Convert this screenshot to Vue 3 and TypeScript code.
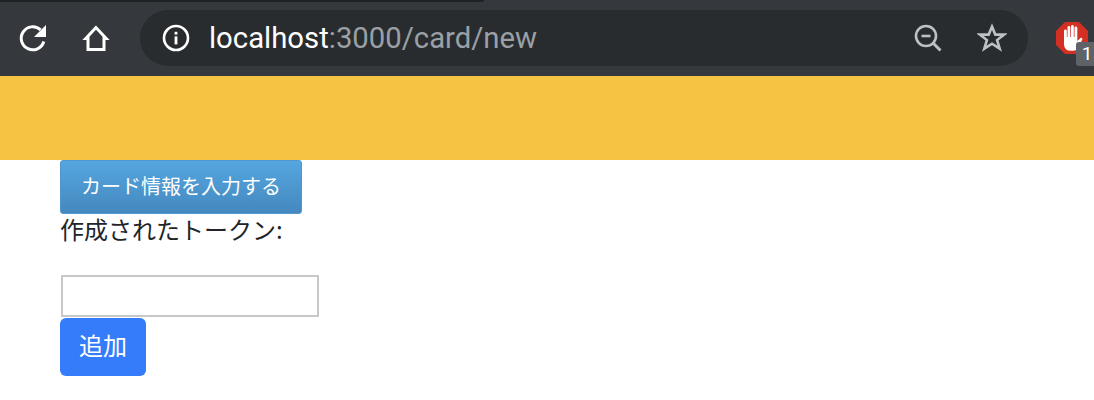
<template>
  <div class="page">
    <div class="browser-bar">
      <div class="tab-strip"></div>
      <div class="toolbar">
        <button class="tool-btn reload" aria-label="reload">
          <svg width="30" height="30" viewBox="0 0 30 30">
            <path d="M25.800 18.500a11.500 11.500 0 1 1-3.200-11.600" fill="none" stroke="#fff" stroke-width="3" />
            <path d="M28 2v12H16z" fill="#fff" />
          </svg>
        </button>
        <button class="tool-btn home" aria-label="home">
          <svg width="30" height="30" viewBox="0 0 30 30">
            <path d="M15 4.600 4.800 15.500H7v11h16v-11h2.200z" fill="none" stroke="#fff" stroke-width="3" stroke-linejoin="miter" />
          </svg>
        </button>
        <div class="omnibox">
          <svg class="info" width="30" height="30" viewBox="0 0 30 30">
            <circle cx="15" cy="15" r="12" fill="none" stroke="#fff" stroke-width="2.600" />
            <rect x="13.600" y="13.400" width="2.800" height="8" fill="#fff" />
            <rect x="13.600" y="8.800" width="2.800" height="2.800" fill="#fff" />
          </svg>
          <div class="url"><span class="host">localhost</span><span class="rest">:3000/card/new</span></div>
          <svg class="zoom-out" width="30" height="30" viewBox="0 0 30 30">
            <circle cx="13" cy="13" r="10" fill="none" stroke="#bdc1c6" stroke-width="2.600" />
            <path d="M8.500 13h9" stroke="#bdc1c6" stroke-width="2.600" />
            <path d="m20 20 7.500 7.500" stroke="#bdc1c6" stroke-width="3" />
          </svg>
          <svg class="star" width="30" height="30" viewBox="0 0 30 30">
            <path d="m15 3.600 3.300 8h8.800l-7 5.500 2.600 8.600-7.700-5-7.700 5 2.600-8.600-7-5.500h8.800z" fill="none" stroke="#bdc1c6" stroke-width="2.600" stroke-linejoin="miter" />
          </svg>
        </div>
        <div class="adblock">
          <svg width="34" height="34" viewBox="0 0 34 34">
            <path d="M10 1h14l9 9v14l-9 9H10l-9-9V10z" fill="#d32f23" />
            <path d="M9 19V10a1.400 1.400 0 0 1 2.800 0v6h.7V6.500a1.400 1.400 0 0 1 2.800 0V16h.7V5.500a1.400 1.400 0 0 1 2.800 0V16h.7V7a1.400 1.400 0 0 1 2.800 0v13l3-2.800c1.300-1 2.800.3 1.800 1.700L23 27c-1 1.500-2.500 2.800-5 2.800h-3c-4 0-6-3-6-7z" fill="#fff" />
          </svg>
          <span class="badge">1</span>
        </div>
      </div>
    </div>

    <header class="site-header"></header>

    <main class="content">
      <button class="stripe-btn">カード情報を入力する</button>
      <p class="token-label">作成されたトークン:</p>
      <input class="token-input" type="text" />
      <button class="submit-btn">追加</button>
    </main>
  </div>
</template>

<script setup lang="ts">
</script>

<style>
html,
body {
  margin: 0;
  background: #fff;
}
</style>

<style scoped>
.page {
  width: 1094px;
  height: 400px;
  overflow: hidden;
  font-family: "Noto Sans CJK JP", "Liberation Sans", sans-serif;
}

.browser-bar {
  height: 76px;
  background: #35383c;
  display: flex;
  flex-direction: column;
}

.tab-strip {
  height: 2px;
  background: #202124;
  margin-right: 610px;
  border-bottom-right-radius: 2px;
}

.toolbar {
  flex: 1;
  display: flex;
  align-items: center;
  padding: 0 0 2px 18px;
}

.tool-btn {
  width: 30px;
  height: 30px;
  padding: 0;
  border: none;
  background: none;
  display: flex;
}

.home {
  margin-left: 33px;
}

.omnibox {
  width: 888px;
  height: 56px;
  margin-left: 29px;
  box-sizing: border-box;
  padding: 0 21px;
  border-radius: 28px;
  background: #292c2f;
  display: flex;
  align-items: center;
}

.url {
  flex: 1;
  margin-left: 18px;
  font-family: Roboto, "Liberation Sans", sans-serif;
  font-size: 29.3px;
  white-space: nowrap;
}

.host {
  color: #fff;
}

.rest {
  color: #9aa0a6;
}

.star {
  margin-left: 34px;
}

.adblock {
  position: relative;
  margin-left: 27px;
  display: flex;
}

.badge {
  position: absolute;
  left: 21px;
  top: 21px;
  width: 22px;
  height: 24px;
  border-radius: 3px;
  background: #5f6368;
  color: #fff;
  font-family: Roboto, "Liberation Sans", sans-serif;
  font-size: 19px;
  line-height: 24px;
  text-align: center;
}

.site-header {
  height: 84px;
  background: #f7c343;
}

.content {
  padding-left: 60px;
  display: flex;
  flex-direction: column;
  align-items: flex-start;
}

.stripe-btn {
  width: 242px;
  height: 54px;
  padding: 0 0 4px;
  border: 1px solid #4f97cf;
  border-radius: 3px;
  background: linear-gradient(#55a6df, #4488bf);
  color: #fff;
  font-family: inherit;
  font-size: 20px;
}

.token-label {
  margin: 0;
  height: 61px;
  font-size: 24px;
  line-height: 30px;
  color: #212529;
}

.token-input {
  width: 258px;
  height: 42px;
  margin-left: 1px;
  box-sizing: border-box;
  border: 2px solid #c8c8c8;
  background: #fff;
  outline: none;
}

.submit-btn {
  width: 86px;
  height: 58px;
  margin-top: 1px;
  padding: 0 0 5px;
  border: none;
  border-radius: 6px;
  background: #347cfa;
  color: #fff;
  font-family: inherit;
  font-size: 24px;
}
</style>
